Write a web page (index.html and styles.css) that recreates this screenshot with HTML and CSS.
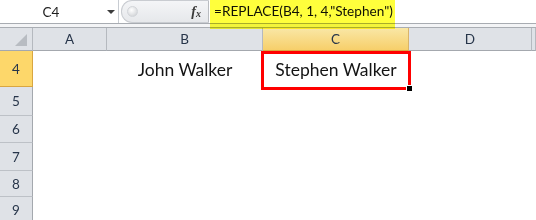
FILE: index.html
```html
<!DOCTYPE html>
<html lang="en">
<head>
  <meta charset="UTF-8">
  <title>REPLACE</title>
  <link rel="stylesheet" href="styles.css">
</head>
<body>
  <div class="sheet">
    <div class="formula-bar">
      <div class="name-box">
        <span class="name">C4</span>
        <span class="drop"></span>
      </div>
      <div class="fx-panel">
        <span class="knob"></span>
        <span class="fx">f<sub>x</sub></span>
      </div>
      <div class="formula">=REPLACE(B4, 1, 4,"Stephen")</div>
    </div>
    <div class="strip"></div>

    <div class="grid">
      <div class="hdr corner"><span class="tri"></span></div>
      <div class="hdr col">A</div>
      <div class="hdr col">B</div>
      <div class="hdr col active">C</div>
      <div class="hdr col">D</div>
      <div class="hdr col"></div>

      <div class="hdr row active">4</div>
      <div class="cell"></div>
      <div class="cell center">John Walker</div>
      <div class="cell center">Stephen Walker</div>
      <div class="cell"></div>
      <div class="cell"></div>

      <div class="hdr row">5</div>
      <div class="cell"></div><div class="cell"></div><div class="cell"></div><div class="cell"></div><div class="cell"></div>
      <div class="hdr row">6</div>
      <div class="cell"></div><div class="cell"></div><div class="cell"></div><div class="cell"></div><div class="cell"></div>
      <div class="hdr row">7</div>
      <div class="cell"></div><div class="cell"></div><div class="cell"></div><div class="cell"></div><div class="cell"></div>
      <div class="hdr row">8</div>
      <div class="cell"></div><div class="cell"></div><div class="cell"></div><div class="cell"></div><div class="cell"></div>
      <div class="hdr row">9</div>
      <div class="cell"></div><div class="cell"></div><div class="cell"></div><div class="cell"></div><div class="cell"></div>
    </div>

    <!-- annotation overlays -->
    <div class="highlight"></div>
    <div class="selection"><span class="handle"></span></div>
  </div>
</body>
</html>
```

FILE: styles.css
```css
body {
  margin: 0;
  background: #ffffff;
  font-family: Lato, "Open Sans", sans-serif;
  color: #1b1b1b;
}

.sheet {
  position: relative;
  width: 536px;
  height: 220px;
  overflow: hidden;
}

.formula-bar {
  display: flex;
  height: 23px;
  border-bottom: 1px solid #a8acb2;
  background: #ffffff;
}

.name-box {
  width: 118px;
  display: flex;
  align-items: center;
  border-right: 1px solid #c8ccd2;
}

.name {
  width: 102px;
  text-align: center;
  font-size: 13.5px;
  color: #1e1e1e;
}

.drop {
  width: 0;
  height: 0;
  border-left: 4px solid transparent;
  border-right: 4px solid transparent;
  border-top: 4px solid #3c3c3c;
  margin-left: 5px;
}

.fx-panel {
  width: 88px;
  margin-left: 2px;
  display: flex;
  align-items: center;
  justify-content: space-between;
  background: linear-gradient(#f4f5f7, #e6e8eb);
  border: 1px solid #c9ccd1;
  border-right: 1px solid #b9bcc1;
  border-radius: 11px 0 0 11px;
  box-sizing: border-box;
  height: 23px;
}

.knob {
  width: 9px;
  height: 9px;
  margin-left: 5px;
  border-radius: 50%;
  background: radial-gradient(circle at 40% 35%, #ffffff, #c9ccd0);
  border: 1px solid #d2d5d9;
}

.fx {
  font-family: "Liberation Serif", serif;
  font-style: italic;
  font-weight: bold;
  font-size: 14px;
  color: #3a3a3a;
  margin-right: 7px;
}

.fx sub {
  font-size: 10px;
  vertical-align: -1px;
}

.formula {
  flex: 1;
  padding-left: 5px;
  font-size: 13.6px;
  line-height: 23px;
  color: #111;
  white-space: nowrap;
}

.strip {
  height: 3px;
  background: #f3f4f6;
  border-bottom: 1px solid #a9adb3;
}

.grid {
  display: grid;
  grid-template-columns: 33px 74px 156px 146px 123px 1fr;
  grid-template-rows: 23px 36px 29px 27px 28px 26px 27px;
}

.hdr {
  box-sizing: border-box;
  display: flex;
  align-items: center;
  justify-content: center;
  background: #dfe2e7;
  color: #27354a;
  font-size: 13.5px;
}

.col {
  border-right: 1px solid #b5b9bf;
  border-bottom: 1px solid #a4a8ae;
}

.row {
  border-right: 1px solid #a4a8ae;
  border-bottom: 1px solid #bdc1c7;
}

.corner {
  position: relative;
  border-right: 1px solid #b5b9bf;
  border-bottom: 1px solid #a4a8ae;
}

.tri {
  position: absolute;
  right: 5px;
  bottom: 4px;
  width: 0;
  height: 0;
  border-left: 12px solid transparent;
  border-bottom: 12px solid #b8bcc2;
}

.col.active {
  background: linear-gradient(#f9e7a6, #f7cf6a);
  border-bottom: 1px solid #d9a640;
  border-right: 1px solid #d9b46a;
}

.row.active {
  background: #fdd76a;
  border-right: 1px solid #d9a640;
  border-bottom: 1px solid #d9a640;
}

.cell {
  background: #ffffff;
}

.center {
  display: flex;
  align-items: center;
  justify-content: center;
  font-size: 17.5px;
  color: #141414;
}

.highlight {
  position: absolute;
  left: 210px;
  top: 0;
  width: 185px;
  height: 29px;
  background: #ffff3c;
  mix-blend-mode: multiply;
}

.selection {
  position: absolute;
  left: 261px;
  top: 51px;
  width: 150px;
  height: 39px;
  box-sizing: border-box;
  border: 3px solid #ff0000;
}

.handle {
  position: absolute;
  right: -5px;
  bottom: -5px;
  width: 5px;
  height: 5px;
  background: #000;
  border: 1px solid #fff;
}
```
